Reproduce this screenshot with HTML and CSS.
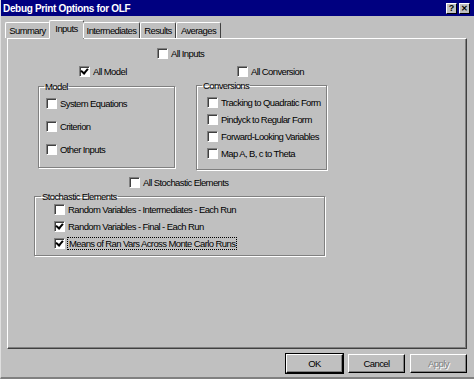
FILE: index.html
```html
<!DOCTYPE html>
<html lang="en">
<head>
    <meta charset="UTF-8">
    <title>Debug Print Options for OLF</title>
    <link rel="stylesheet" href="styles.css">
</head>
<body>
    <div class="dialog">
        <div class="titlebar">
            <span class="title">Debug Print Options for OLF</span>
            <div class="caption-buttons">
                <span class="cap-btn">?</span>
                <span class="cap-btn close">&#x2715;</span>
            </div>
        </div>

        <div class="tabs">
            <span class="tab tab-summary">Summary</span>
            <span class="tab tab-inputs active">Inputs</span>
            <span class="tab tab-inter">Intermediates</span>
            <span class="tab tab-results">Results</span>
            <span class="tab tab-averages">Averages</span>
        </div>

        <div class="panel">
            <div class="row row-all-inputs">
                <label class="check"><span class="box"></span>All Inputs</label>
            </div>
            <div class="row row-all">
                <label class="check all-model"><span class="box checked"></span>All Model</label>
                <label class="check"><span class="box"></span>All Conversion</label>
            </div>

            <div class="row groups">
                <fieldset class="group model">
                    <legend>Model</legend>
                    <label class="check"><span class="box"></span>System Equations</label>
                    <label class="check"><span class="box"></span>Criterion</label>
                    <label class="check"><span class="box"></span>Other Inputs</label>
                </fieldset>
                <fieldset class="group conversions">
                    <legend>Conversions</legend>
                    <label class="check"><span class="box"></span>Tracking to Quadratic Form</label>
                    <label class="check"><span class="box"></span>Pindyck to Regular Form</label>
                    <label class="check"><span class="box"></span>Forward-Looking Variables</label>
                    <label class="check"><span class="box"></span>Map A, B, c to Theta</label>
                </fieldset>
            </div>

            <div class="row row-all-stoch">
                <label class="check"><span class="box"></span>All Stochastic Elements</label>
            </div>

            <fieldset class="group stochastic">
                <legend>Stochastic Elements</legend>
                <label class="check"><span class="box"></span>Random Variables - Intermediates - Each Run</label>
                <label class="check"><span class="box checked"></span>Random Variables - Final - Each Run</label>
                <label class="check"><span class="box checked"></span><span class="focus">Means of Ran Vars Across Monte Carlo Runs</span></label>
            </fieldset>
        </div>

        <div class="buttons">
            <span class="btn default">OK</span>
            <span class="btn">Cancel</span>
            <span class="btn disabled">Apply</span>
        </div>
    </div>
</body>
</html>
```

FILE: styles.css
```css
* {
    margin: 0;
    padding: 0;
    box-sizing: border-box;
}

body {
    background-color: #c0c0c0;
    font-family: 'Liberation Sans', Arial, sans-serif;
    font-size: 9.5px;
    letter-spacing: -0.6px;
    color: #000;
    width: 474px;
    height: 379px;
    overflow: hidden;
}

.dialog {
    width: 474px;
    height: 379px;
    border-left: 1px solid #dfdfdf;
    border-bottom: 2px solid #808080;
    display: flex;
    flex-direction: column;
}

.titlebar {
    height: 16px;
    background-color: #000080;
    color: white;
    display: flex;
    align-items: center;
    justify-content: space-between;
    padding: 0 4px 0 2px;
}

.title {
    font-weight: bold;
    font-size: 10px;
    letter-spacing: -0.33px;
}

.caption-buttons {
    display: flex;
    gap: 2px;
}

.cap-btn {
    width: 11px;
    height: 11px;
    background-color: #c0c0c0;
    color: black;
    border-top: 1px solid #fff;
    border-left: 1px solid #fff;
    border-right: 1px solid #000;
    border-bottom: 1px solid #000;
    font-size: 9px;
    font-weight: bold;
    letter-spacing: 0;
    line-height: 9px;
    text-align: center;
}

.cap-btn.close {
    font-size: 8px;
}

/* onglets */
.tabs {
    display: flex;
    align-items: flex-end;
    padding: 5px 0 0 4px;
    height: 22px;
    position: relative;
    z-index: 1;
}

.tab {
    height: 16px;
    padding-top: 2px;
    text-align: center;
    border-top: 1px solid #fff;
    border-left: 1px solid #fff;
    border-right: 1px solid #404040;
    border-radius: 2px 2px 0 0;
}

.tab-summary { width: 45px; }
.tab-inputs { width: 35px; }
.tab-inter { width: 57px; }
.tab-results { width: 36px; }
.tab-averages { width: 45px; }

.tab.active {
    height: 19px;
    padding-top: 2px;
    margin: 0 -1px -1px;
    background-color: #c0c0c0;
    border-bottom: 1px solid #c0c0c0;
}

.panel {
    margin: 0 7px 0 6px;
    height: 311px;
    border-top: 1px solid #fff;
    border-left: 1px solid #fff;
    border-right: 1px solid #404040;
    border-bottom: 1px solid #404040;
    box-shadow: inset -1px -1px 0 #808080;
    padding-top: 8px;
}

/* cases a cocher */
.check {
    display: flex;
    align-items: center;
    gap: 3px;
    height: 13px;
    white-space: nowrap;
}

.box {
    width: 11px;
    height: 11px;
    background-color: #fff;
    border-top: 1px solid #808080;
    border-left: 1px solid #808080;
    border-right: 1px solid #fff;
    border-bottom: 1px solid #fff;
    box-shadow: inset 1px 1px 0 #404040;
    flex-shrink: 0;
    position: relative;
}

.box.checked::after {
    content: "";
    position: absolute;
    left: 2px;
    top: 0;
    width: 3px;
    height: 5px;
    border-right: 2px solid #000;
    border-bottom: 2px solid #000;
    transform: rotate(40deg);
}

.row {
    display: flex;
}

.row-all-inputs {
    padding-left: 149px;
}

.row-all {
    margin-top: 5px;
}

.all-model {
    margin-left: 71px;
    width: 158px;
}

.groups {
    margin-top: 3px;
    align-items: flex-start;
}

.group {
    border: 1px solid #808080;
    box-shadow: 1px 1px 0 #fff, inset 1px 1px 0 #fff;
    display: flex;
    flex-direction: column;
}

.group legend {
    padding: 0 1px;
    line-height: 11px;
}

.model {
    margin-left: 30px;
    width: 137px;
    height: 87px;
    gap: 10px;
    padding: 5px 0 0 7px;
}

.model legend {
    margin-left: -2px;
}

.conversions {
    margin: -1px 0 0 21px;
    width: 131px;
    height: 90px;
    gap: 4px;
    padding: 5px 0 0 10px;
}

.conversions legend {
    margin-left: -5px;
}

.row-all-stoch {
    margin-top: 6px;
    padding-left: 121px;
}

.stochastic {
    margin: 2px 0 0 26px;
    width: 291px;
    height: 65px;
    gap: 4px;
    padding: 1px 0 0 19px;
}

.stochastic legend {
    margin-left: -13px;
}

.focus {
    outline: 1px dotted #000;
    padding: 0 1px;
}

/* boutons */
.buttons {
    display: flex;
    justify-content: flex-end;
    gap: 5px;
    padding: 5px 7px 0 0;
}

.btn {
    width: 57px;
    height: 19px;
    display: flex;
    align-items: center;
    justify-content: center;
    border-top: 1px solid #fff;
    border-left: 1px solid #fff;
    border-right: 1px solid #000;
    border-bottom: 1px solid #000;
    box-shadow: inset -1px -1px 0 #808080;
}

.btn.default {
    outline: 1px solid #000;
}

.btn.disabled {
    color: #808080;
    text-shadow: 1px 1px 0 #fff;
}
```
